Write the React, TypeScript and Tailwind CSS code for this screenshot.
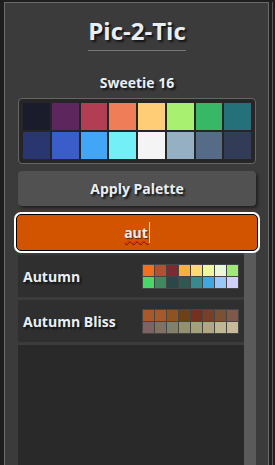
const sweetie = [
  "#1a1c2c", "#5d275d", "#b13e53", "#ef7d57", "#ffcd75", "#a7f070", "#38b764", "#257179",
  "#29366f", "#3b5dc9", "#41a6f6", "#73eff7", "#f4f4f4", "#94b0c2", "#566c86", "#333c57",
];

const results = [
  {
    name: "Autumn",
    colors: [
      "#f07020", "#b05232", "#7a2a30", "#f8b040", "#fdd878", "#eef8a0", "#e8f8d8", "#a0e878",
      "#48d868", "#408860", "#2a4848", "#305850", "#388890", "#40a8e0", "#98c8f8", "#d0d0f8",
    ],
  },
  {
    name: "Autumn Bliss",
    colors: [
      "#a9582a", "#a65a2c", "#8f5220", "#6f4016", "#75301e", "#7a4027", "#7b5033", "#805848",
      "#806262", "#827060", "#828068", "#929270", "#a2a278", "#b0a882", "#c0b890", "#c8ba98",
    ],
  },
];

const shadow = "[text-shadow:2px_2px_2px_#141414]";

export default function App() {
  return (
    <div className="h-[465px] overflow-hidden bg-[#1e1e1e] flex font-['Open_Sans',sans-serif] font-bold text-[#e8eef4]">
      <div className="ml-[4px] mt-[2px] w-[265px] h-[520px] border border-[#6b6b6b] bg-[#3b3b3b] flex flex-col pl-[13px] pr-[12px]">
        {/* header */}
        <div className="flex justify-center pt-[12px]">
          <h1 className={`text-[24px] leading-[32px] pb-[3px] border-b border-[#777] ${shadow}`}>Pic-2-Tic</h1>
        </div>

        <p className={`mt-[22px] text-center text-[14px] leading-[20px] ${shadow}`}>Sweetie 16</p>

        {/* current palette */}
        <div className="mt-[5px] border border-[#666] rounded-[4px] bg-[#262626] p-[4px] grid grid-cols-8 gap-[2px]">
          {sweetie.map((c) => (
            <div key={c} className="h-[27px]" style={{ backgroundColor: c }} />
          ))}
        </div>

        <button className={`mt-[7px] h-[35px] rounded-[4px] bg-[#515151] text-[14px] font-bold shadow-[2px_2px_3px_rgba(0,0,0,0.45)] ${shadow}`}>
          Apply Palette
        </button>

        {/* search */}
        <div className="relative z-10 mt-[8px] -mx-[2px] h-[37px] rounded-[5px] border border-black bg-[#d35400] shadow-[0_0_0_2px_#fff] flex items-center justify-center text-[14px]">
          <span className="underline decoration-wavy decoration-[#e01010] decoration-[1px] underline-offset-[2px] [text-shadow:1px_1px_1px_#5a2000]">aut</span>
          <span className="ml-px w-px h-[21px] bg-[#f0f0f0]" />
        </div>

        {/* results */}
        <div className="flex flex-1">
          <div className="w-[226px] bg-[#292929] border-t-[4px] border-[#3b3b3b]">
            {results.map((r) => (
              <div key={r.name} className="h-[45px] border-b-[3px] border-[#3b3b3b] bg-[#2f2f2f] flex items-center justify-between pl-[5px] pr-[5px]">
                <span className={`text-[14px] ${shadow}`}>{r.name}</span>
                <div className="grid grid-cols-8 gap-px p-px bg-[#454545]">
                  {r.colors.map((c, i) => (
                    <div key={i} className="w-[11px] h-[11px]" style={{ backgroundColor: c }} />
                  ))}
                </div>
              </div>
            ))}
          </div>
          <div className="w-[12px] bg-[#5a5a5a]" />
        </div>
      </div>
      <div className="ml-[3px] mt-[2px] w-px bg-[#5a5a5a]" />
    </div>
  );
}
